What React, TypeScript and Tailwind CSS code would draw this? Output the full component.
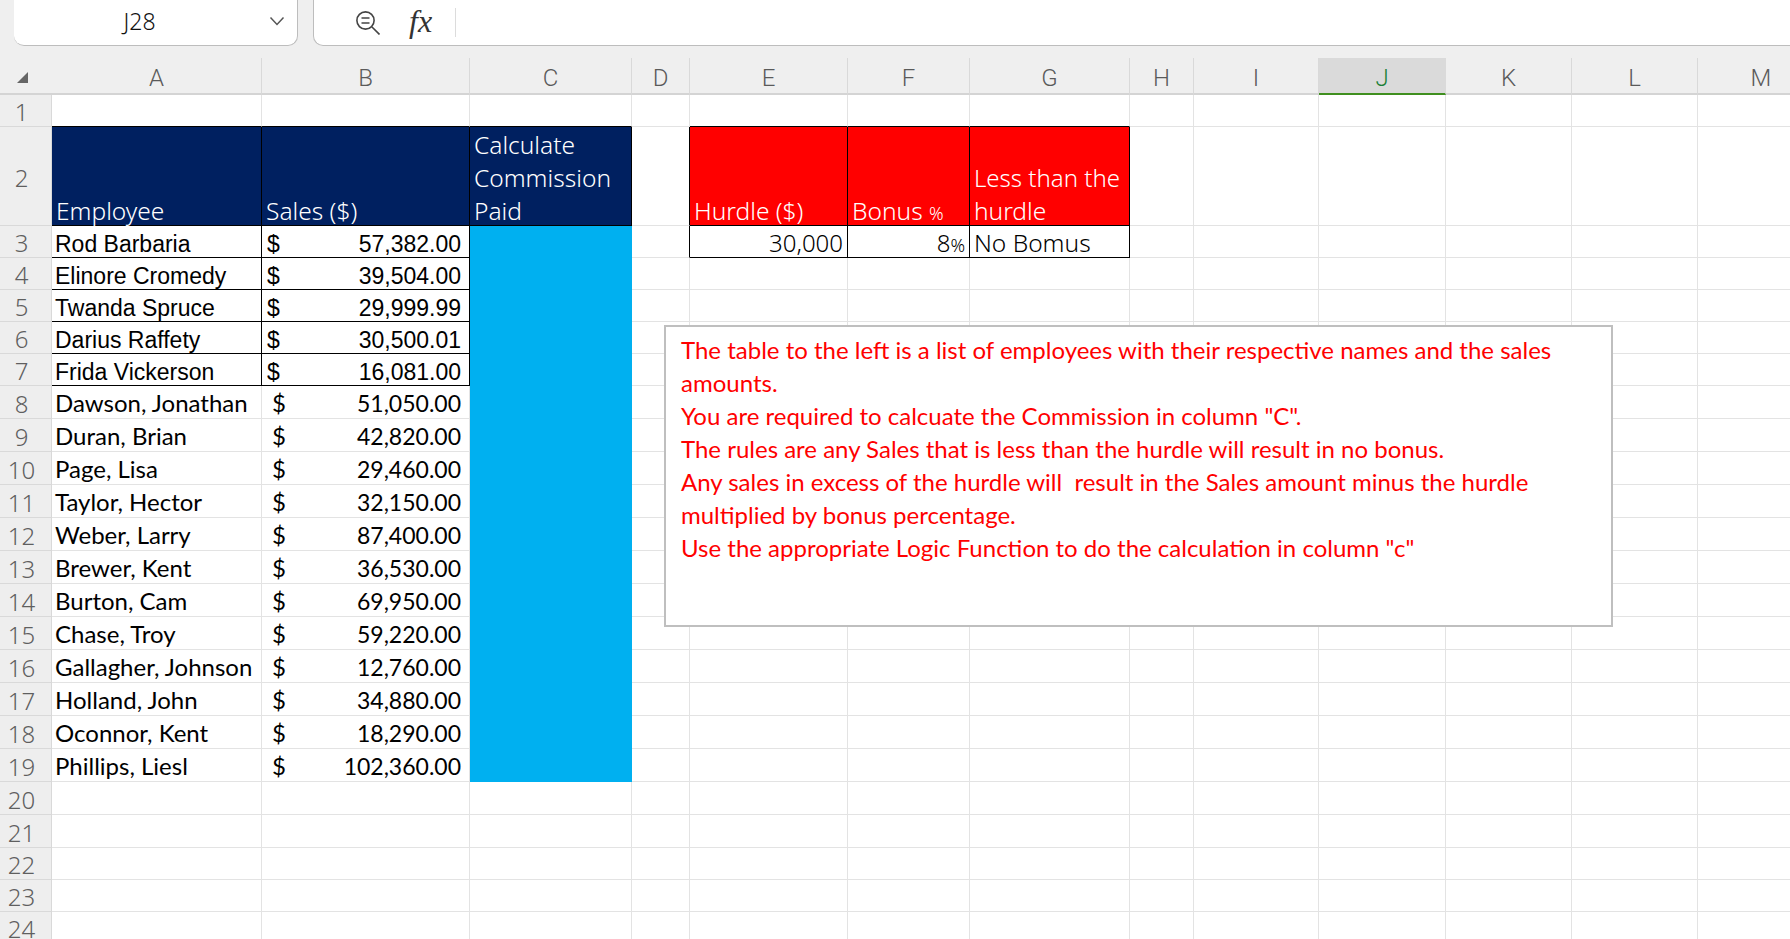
import React from 'react'

const columns = [
  { name: 'A', width: 'w-[210px]' },
  { name: 'B', width: 'w-[208px]' },
  { name: 'C', width: 'w-[162px]' },
  { name: 'D', width: 'w-[58px]' },
  { name: 'E', width: 'w-[158px]' },
  { name: 'F', width: 'w-[122px]' },
  { name: 'G', width: 'w-[160px]' },
  { name: 'H', width: 'w-[64px]' },
  { name: 'I', width: 'w-[125px]' },
  { name: 'J', width: 'w-[127px]' },
  { name: 'K', width: 'w-[126px]' },
  { name: 'L', width: 'w-[126px]' },
  { name: 'M', width: 'w-[127px]' },
]

const boxed = [
  ['Rod Barbaria', '57,382.00'],
  ['Elinore Cromedy', '39,504.00'],
  ['Twanda Spruce', '29,999.99'],
  ['Darius Raffety', '30,500.01'],
  ['Frida Vickerson', '16,081.00'],
]

const plain = [
  ['Dawson, Jonathan', '51,050.00'],
  ['Duran, Brian', '42,820.00'],
  ['Page, Lisa', '29,460.00'],
  ['Taylor, Hector', '32,150.00'],
  ['Weber, Larry', '87,400.00'],
  ['Brewer, Kent', '36,530.00'],
  ['Burton, Cam', '69,950.00'],
  ['Chase, Troy', '59,220.00'],
  ['Gallagher, Johnson', '12,760.00'],
  ['Holland, John', '34,880.00'],
  ['Oconnor, Kent', '18,290.00'],
  ['Phillips, Liesl', '102,360.00'],
]

const note = [
  'The table to the left is a list of employees with their respective names and the sales',
  'amounts.',
  'You are required to calcuate the Commission in column "C".',
  'The rules are any Sales that is less than the hurdle will result in no bonus.',
  'Any sales in excess of the hurdle will  result in the Sales amount minus the hurdle',
  'multiplied by bonus percentage.',
  'Use the appropriate Logic Function to do the calculation in column "c"',
]

const thin = "font-['Noto_Sans',sans-serif] font-light"
const arial = "font-['Liberation_Sans',sans-serif]"
const sheetFont = "font-['Lato',sans-serif]"
const headText = `px-[4px] translate-y-[2px] text-[24.5px] leading-[33px] text-white ${thin}`

// which cells get a black edge: "row:column", column 0 is the row header
const blackRight = new Set([
  '2:1', '3:1', '4:1', '5:1', '6:1', '7:1',
  '2:2', '3:2', '4:2', '5:2', '6:2', '7:2',
  '2:3',
  '2:4', '3:4',
  '2:5', '3:5',
  '2:6', '3:6',
  '2:7', '3:7',
])

const blackBottom = new Set([
  '1:1', '1:2', '1:3', '1:5', '1:6', '1:7',
  '2:1', '2:2', '2:3', '2:5', '2:6', '2:7',
  '3:1', '3:2', '3:5', '3:6', '3:7',
  '4:1', '4:2', '5:1', '5:2', '6:1', '6:2', '7:1', '7:2',
])

const Cell = ({ row, col, width, fill, children }: { row: number; col: number; width: string; fill?: string; children?: React.ReactNode }) => {
  const right = blackRight.has(`${row}:${col}`) ? 'border-r-black' : fill === 'blue' ? 'border-r-[#00b0f0]' : 'border-r-[#e3e3e3]'
  const bottom = blackBottom.has(`${row}:${col}`) ? 'border-b-black' : fill === 'blue' ? 'border-b-[#00b0f0]' : 'border-b-[#e3e3e3]'
  const bg = fill === 'blue' ? 'bg-[#00b0f0]' : fill === 'navy' ? 'bg-[#002060]' : fill === 'red' ? 'bg-[#ff0000]' : 'bg-white'
  return (
    <div className={`relative flex flex-col justify-end shrink-0 h-full border-r border-b overflow-visible whitespace-nowrap ${width} ${right} ${bottom} ${bg}`}>
      {children}
    </div>
  )
}

const Row = ({ row, height, cells }: { row: number; height: string; cells: Record<number, { fill?: string; node?: React.ReactNode }> }) => (
  <div className={`flex ${height}`}>
    <div className={`flex items-center justify-center shrink-0 w-[52px] pr-[8px] pt-[3px] bg-[#eeeeee] text-[24px] text-[#5f5f5f] border-r border-r-[#d9d9d9] border-b border-b-[#d9d9d9] ${thin}`}>
      {row}
    </div>
    {columns.map((column, i) => (
      <Cell key={column.name} row={row} col={i + 1} width={column.width} fill={cells[i + 1]?.fill}>
        {cells[i + 1]?.node}
      </Cell>
    ))}
  </div>
)

const App = () => {
  return (
    <div className="relative w-[1790px] h-[939px] overflow-hidden bg-[#efefef]">
      {/* Formula bar */}
      <div className="flex h-[46px]">
        <div className="relative flex items-center justify-center w-[284px] ml-[14px] pr-[32px] bg-white rounded-b-[10px] border-r border-b border-[#bdbdbd]">
          <span className="mb-[2px] text-[23px] text-[#111] font-['Noto_Sans',sans-serif] font-light">J28</span>
          <svg className="absolute right-[12px] top-[16px]" width="16" height="11" viewBox="0 0 16 11" fill="none" stroke="#555" strokeWidth="1.5">
            <path d="M1.5 1.5 L8 8.5 L14.5 1.5" />
          </svg>
        </div>
        <div className="flex items-center flex-1 ml-[15px] bg-white rounded-bl-[10px] border-l border-b border-[#bdbdbd]">
          <svg className="ml-[42px]" width="24" height="24" viewBox="0 0 24 24" fill="none" stroke="#444" strokeWidth="1.6">
            <circle cx="9.5" cy="9.5" r="8.6" />
            <path d="M5.5 7 H13.5 M5.5 12 H13.5 M16 16 L23.5 23.5" />
          </svg>
          <span className="ml-[29px] mb-[4px] w-[23px] text-[32px] leading-none italic text-[#333] font-['Liberation_Serif',serif]">fx</span>
          <div className="ml-[23px] w-px h-[29px] bg-[#dcdcdc]" />
        </div>
      </div>

      {/* Column headers */}
      <div className="flex h-[37px] mt-[12px]">
        <div className="flex items-end shrink-0 w-[52px] pl-[17px] pb-[10px] border-b-2 border-b-[#d4d4d4]">
          <svg width="11" height="11" viewBox="0 0 11 11" fill="#666">
            <path d="M11 0 V11 H0 Z" />
          </svg>
        </div>
        {columns.map((column) => (
          <div
            key={column.name}
            className={`flex items-center justify-center shrink-0 pt-[5px] text-[24px] font-light font-['Roboto',sans-serif] border-r ${column.width} ${column.name === 'J' ? 'bg-[#dadada] text-[#1a7f37] border-b-2 border-b-[#3f8f1f] border-r-transparent' : 'text-[#5a5a5a] border-b-2 border-b-[#d4d4d4] border-r-[#d9d9d9]'}`}
          >
            {column.name}
          </div>
        ))}
      </div>

      <Row row={1} height="h-[32px]" cells={{}} />
      <Row
        row={2}
        height="h-[99px]"
        cells={{
          1: { fill: 'navy', node: <div className={headText}>Employee</div> },
          2: { fill: 'navy', node: <div className={headText}>Sales ($)</div> },
          3: {
            fill: 'navy',
            node: (
              <div className={headText}>
                <div>Calculate</div>
                <div>Commission</div>
                <div>Paid</div>
              </div>
            ),
          },
          5: { fill: 'red', node: <div className={headText}>Hurdle ($)</div> },
          6: { fill: 'red', node: <div className={headText}>Bonus <span className="text-[18px] leading-none">%</span></div> },
          7: {
            fill: 'red',
            node: (
              <div className={headText}>
                <div className="text-[24px]">Less than the</div>
                <div>hurdle</div>
              </div>
            ),
          },
        }}
      />
      {boxed.map(([name, amount], i) => (
        <Row
          key={name}
          row={i + 3}
          height="h-[32px]"
          cells={{
            1: { node: <div className={`px-[3px] translate-y-[3px] text-[23px] leading-[31px] text-black ${arial}`}>{name}</div> },
            2: {
              node: (
                <div className={`flex justify-between pl-[5px] pr-[8px] translate-y-[3px] text-[23px] leading-[31px] text-black ${arial}`}>
                  <span>$</span>
                  <span>{amount}</span>
                </div>
              ),
            },
            3: { fill: 'blue' },
            ...(i === 0
              ? {
                  5: { node: <div className={`px-[4px] translate-y-[1px] text-right text-[24px] leading-[31px] text-black ${thin}`}>30,000</div> },
                  6: { node: <div className={`px-[4px] translate-y-[1px] text-right text-[24px] leading-[31px] text-black ${thin}`}>8<span className="text-[18px] leading-none">%</span></div> },
                  7: { node: <div className={`px-[4px] translate-y-[1px] text-[24.5px] leading-[31px] text-black ${thin}`}>No Bomus</div> },
                }
              : {}),
          }}
        />
      ))}
      {plain.map(([name, amount], i) => (
        <Row
          key={name}
          row={i + 8}
          height="h-[33px]"
          cells={{
            1: { node: <div className={`px-[3px] translate-y-[1px] text-[24px] leading-[32px] text-black ${sheetFont}`}>{name}</div> },
            2: {
              node: (
                <div className={`flex justify-between items-center pl-[10px] pr-[8px] translate-y-[1px] leading-[32px] text-black ${sheetFont}`}>
                  <span className="text-[24px]">$</span>
                  <span className="text-[23px]">{amount}</span>
                </div>
              ),
            },
            3: { fill: 'blue' },
          }}
        />
      ))}
      <Row row={20} height="h-[33px]" cells={{}} />
      <Row row={21} height="h-[33px]" cells={{}} />
      <Row row={22} height="h-[32px]" cells={{}} />
      <Row row={23} height="h-[32px]" cells={{}} />
      <Row row={24} height="h-[32px]" cells={{}} />

      {/* Text box floating over the sheet */}
      <div className={`absolute left-[664px] top-[325px] w-[949px] h-[302px] pl-[15px] pt-[6px] bg-white border-2 border-[#bfbfbf] text-[24px] leading-[33px] text-[#ff0000] ${sheetFont}`}>
        {note.map((line) => (
          <div key={line} className="whitespace-pre">{line}</div>
        ))}
      </div>
    </div>
  )
}

export default App
